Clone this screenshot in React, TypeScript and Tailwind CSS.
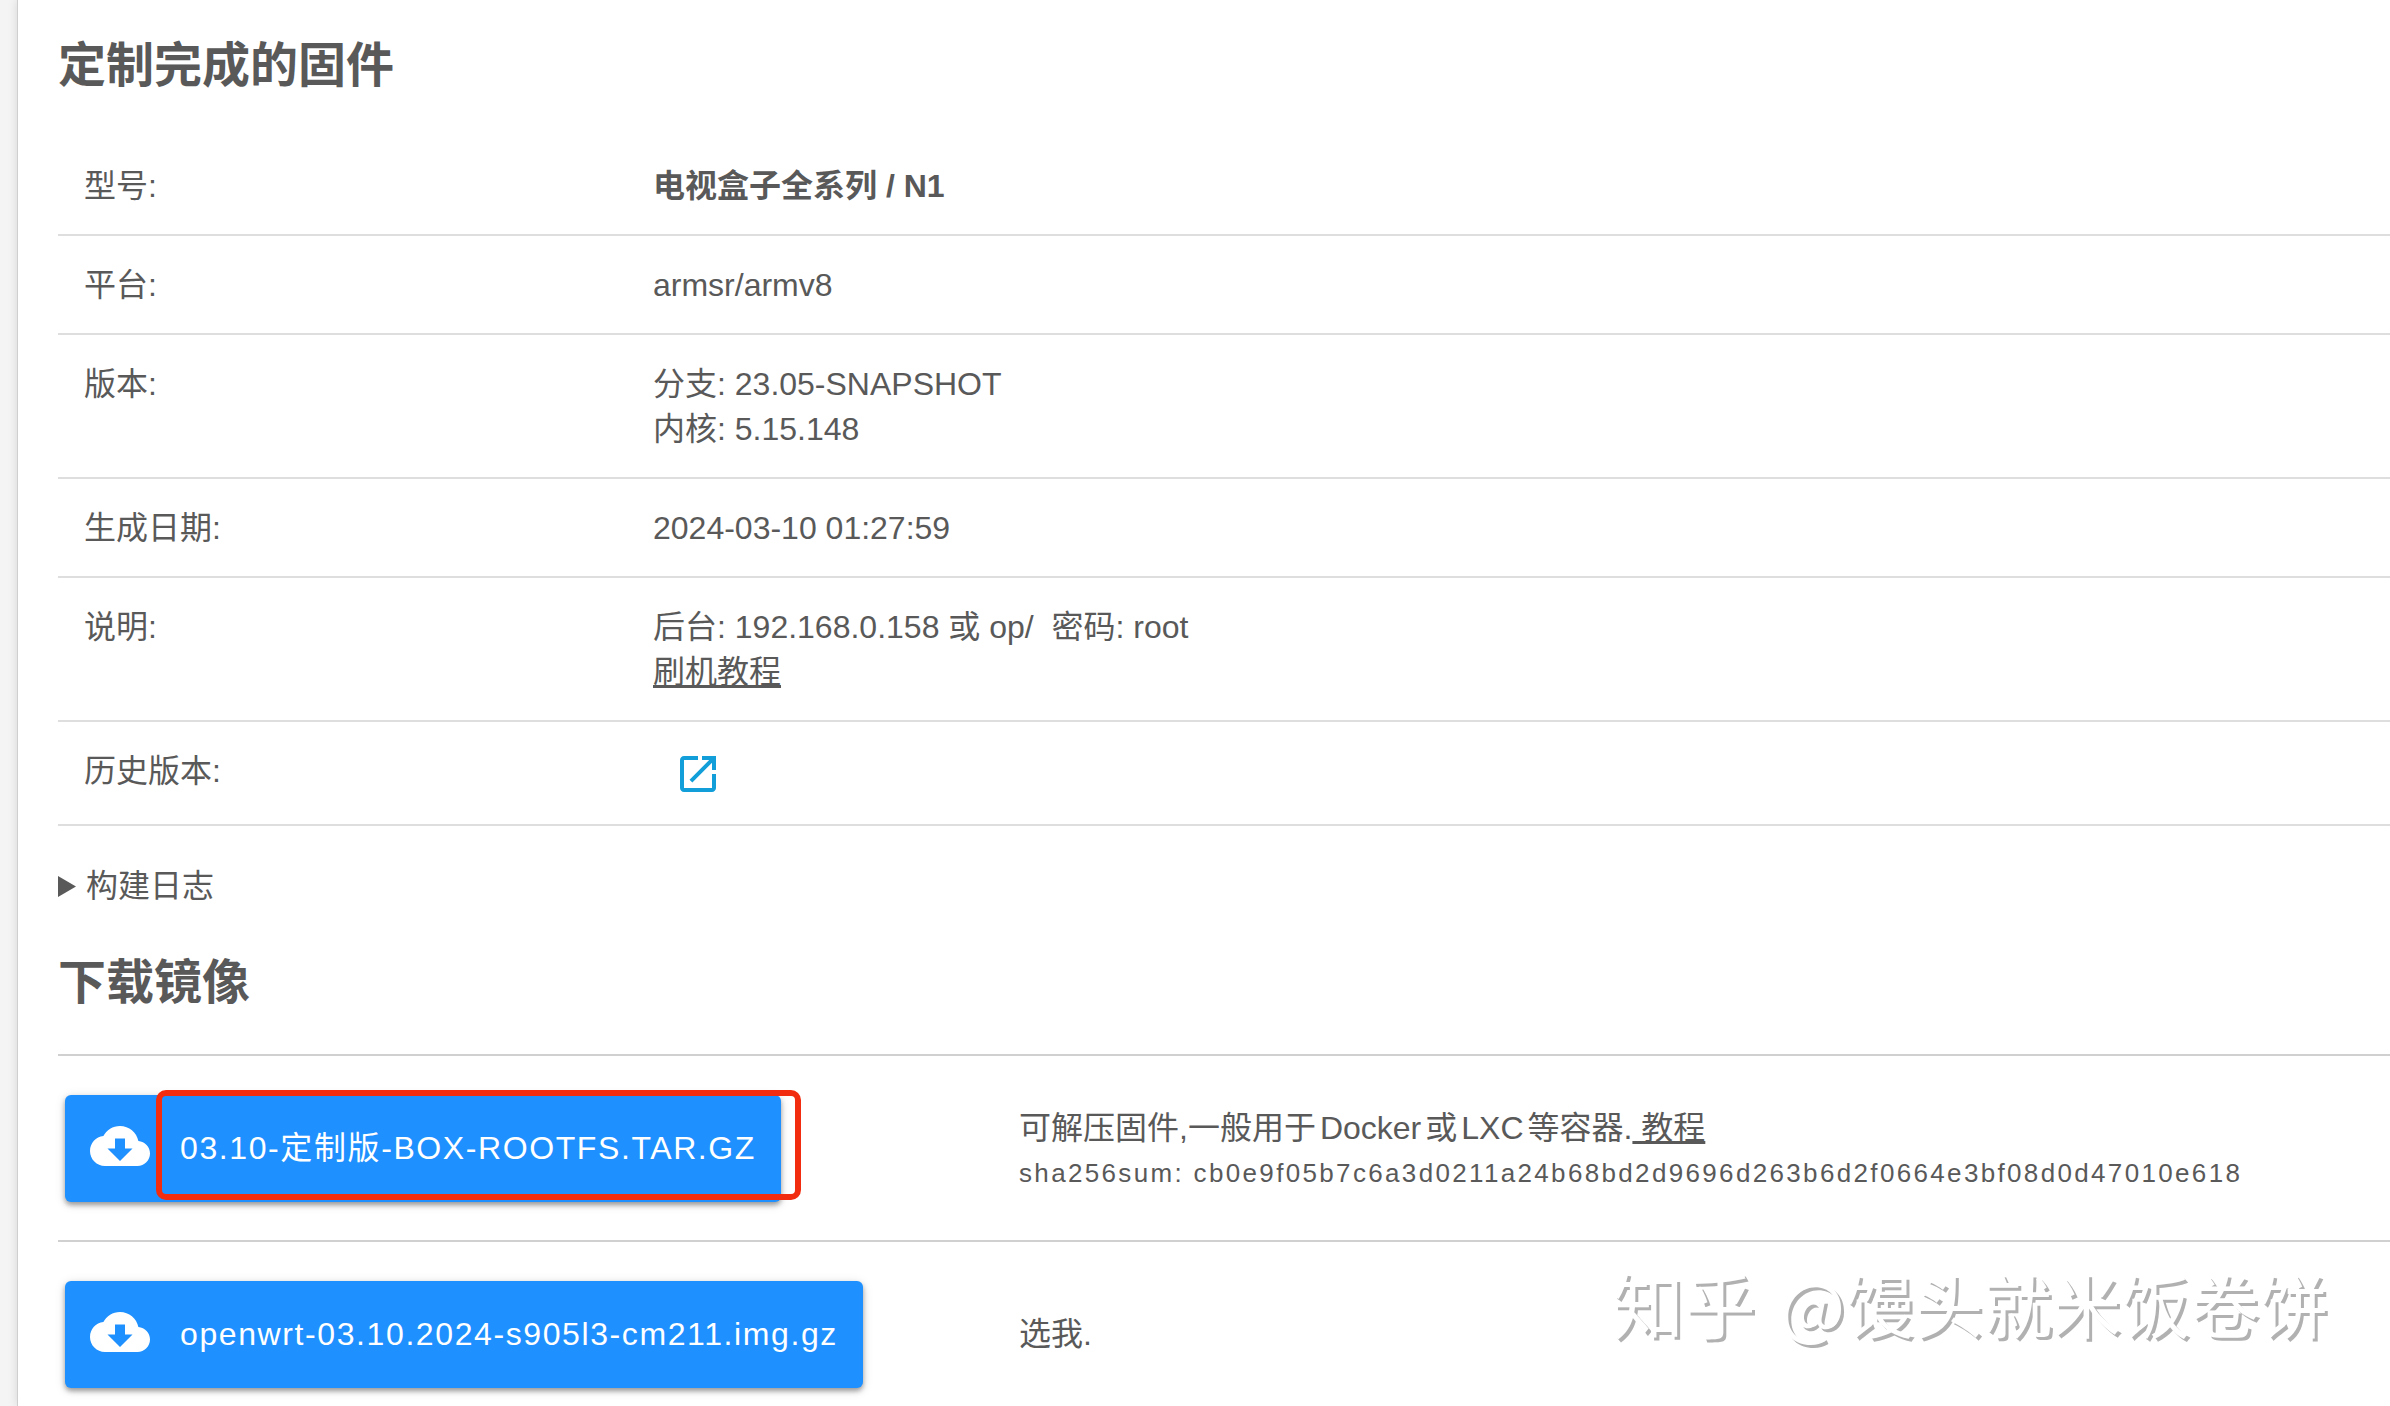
import type { ReactNode } from 'react';

const CELL = 'border-b-2 border-[#dedede] px-[26px] pt-[27px] pb-[25px] align-top text-left';

function InfoRow({ label, children }: { label: string; children: ReactNode }) {
  return (
    <tr>
      <th scope="row" className={`${CELL} w-[569px] font-normal`}>
        {label}
      </th>
      <td className={CELL}>{children}</td>
    </tr>
  );
}

function CloudDownloadIcon() {
  return (
    <svg viewBox="0 0 24 24" className="mb-[5px] size-[60px] shrink-0" fill="currentColor" aria-hidden="true">
      <path d="M19.35 10.04C18.67 6.59 15.64 4 12 4 9.11 4 6.6 5.64 5.35 8.04 2.34 8.36 0 10.91 0 14c0 3.31 2.69 6 6 6h13c2.76 0 5-2.24 5-5 0-2.64-2.05-4.78-4.65-4.96zM17 13l-5 5-5-5h3V9h4v4h3z" />
    </svg>
  );
}

function OpenInNewIcon() {
  return (
    <svg viewBox="0 0 24 24" className="size-12" fill="currentColor" aria-hidden="true">
      <path d="M19 19H5V5h7V3H5c-1.11 0-2 .9-2 2v14c0 1.1.89 2 2 2h14c1.1 0 2-.9 2-2v-7h-2v7zM14 3v2h3.59l-9.83 9.83 1.41 1.41L19 6.41V10h2V3h-7z" />
    </svg>
  );
}

function DownloadButton({ name }: { name: string }) {
  return (
    <button
      type="button"
      className="flex h-[107px] items-center gap-[30px] rounded-md bg-[#1e90ff] px-[25px] tracking-wider whitespace-nowrap text-white shadow-[0_3px_5px_rgba(0,0,0,0.35),0_2px_12px_rgba(0,0,0,0.12)]"
    >
      <CloudDownloadIcon />
      {name}
    </button>
  );
}

export default function App() {
  return (
    <div className="flex min-h-screen overflow-hidden bg-[#f4f4f4] pl-[18px] font-['Liberation_Sans','Noto_Sans_CJK_SC',sans-serif] text-[32px] leading-[45px] text-[#595959]">
      <main className="relative min-w-0 flex-1 bg-white pt-8 pl-10 shadow-[0_0_0_1px_#cfcfcf,0_0_10px_rgba(0,0,0,0.15)]">
        <h1 className="mb-[37px] text-5xl leading-[68px] font-bold">定制完成的固件</h1>

        <table className="w-full border-separate border-spacing-0">
          <tbody>
            <InfoRow label="型号:">
              <strong>电视盒子全系列 / N1</strong>
            </InfoRow>
            <InfoRow label="平台:">armsr/armv8</InfoRow>
            <InfoRow label="版本:">
              分支: 23.05-SNAPSHOT
              <br />
              内核: 5.15.148
            </InfoRow>
            <InfoRow label="生成日期:">2024-03-10 01:27:59</InfoRow>
            <InfoRow label="说明:">
              后台: 192.168.0.158 或 op/&nbsp; 密码: root
              <br />
              <a href="#tutorial" className="underline">
                刷机教程
              </a>
            </InfoRow>
            <InfoRow label="历史版本:">
              <a href="#history" aria-label="历史版本" className="ml-[21px] flex h-[50px] w-12 items-center text-[#129fd9]">
                <OpenInNewIcon />
              </a>
            </InfoRow>
          </tbody>
        </table>

        <details className="mt-[38px]">
          <summary className="flex list-none items-center gap-2.5">
            <svg viewBox="0 0 18 21" className="h-[21px] w-[18px]" fill="currentColor" aria-hidden="true">
              <path d="M0 0l18 10.5L0 21z" />
            </svg>
            构建日志
          </summary>
        </details>

        <h2 className="mt-10 mb-[37px] text-5xl leading-[68px] font-bold">下载镜像</h2>

        <table className="w-full border-separate border-spacing-0 border-t-2 border-[#d0d0d0]">
          <tbody>
            <tr>
              <td className="w-[961px] border-b-2 border-[#d0d0d0] pt-[39px] pb-[38px] pl-[7px]">
                <div className="relative w-fit">
                  <DownloadButton name="03.10-定制版-BOX-ROOTFS.TAR.GZ" />
                  {/* highlight frame around the file name */}
                  <span
                    className="pointer-events-none absolute -top-[5px] -right-[20px] bottom-[2px] left-[91px] rounded-[10px] border-6 border-[#f22c0e]"
                    aria-hidden="true"
                  />
                </div>
              </td>
              <td className="border-b-2 border-[#d0d0d0] pt-[41px] pb-9 [text-autospace:normal]">
                <p>
                  可解压固件,一般用于Docker或LXC等容器.
                  <a href="#rootfs" className="whitespace-pre underline">
                    {' 教程'}
                  </a>
                </p>
                <p className="text-[26px] tracking-[0.09em] whitespace-nowrap">
                  sha256sum: cb0e9f05b7c6a3d0211a24b68bd2d9696d263b6d2f0664e3bf08d0d47010e618
                </p>
              </td>
            </tr>
            <tr>
              <td className="pt-[39px] pb-4 pl-[7px]">
                <DownloadButton name="openwrt-03.10.2024-s905l3-cm211.img.gz" />
              </td>
              <td className="pt-[39px] pb-4">选我.</td>
            </tr>
          </tbody>
        </table>

        <div className="pointer-events-none absolute right-[62px] bottom-[53px] flex items-baseline gap-6 font-['Noto_Sans_CJK_SC',sans-serif] text-[69px] leading-[100px] text-white [text-shadow:3px_3px_0_#b1b1b1]">
          <span className="text-7xl leading-[100px]">知乎</span>
          <span>@馒头就米饭卷饼</span>
        </div>
      </main>
    </div>
  );
}
